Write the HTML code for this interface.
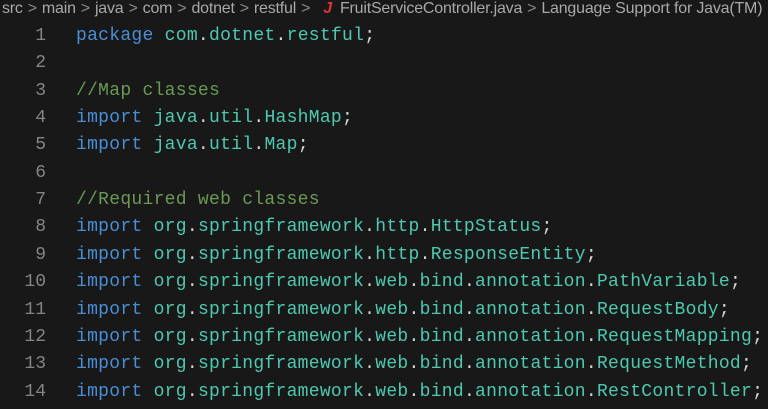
<!DOCTYPE html>
<html><head><meta charset="utf-8"><style>
html,body{margin:0;padding:0;background:#181818;width:768px;height:409px;overflow:hidden}
.bc{position:absolute;left:2px;top:0;height:26px;line-height:26px;font:16px "Liberation Sans",sans-serif;color:#a8a8a8;white-space:nowrap;letter-spacing:-0.2px}
.bc .s{color:#8a8a8a;margin:0 5px}
.bc .j{color:#e0323a;font-weight:bold;font-style:italic;margin:0 8px 0 8px}
.ln{position:absolute;left:0;width:46px;text-align:right;font:18px "Liberation Mono",monospace;color:#858585}
.cd{position:absolute;left:76px;font:18px "Liberation Mono",monospace;letter-spacing:0.28px;color:#d4d4d4;white-space:pre}
.k{color:#4a8ed6}.t{color:#4ec9b0}.c{color:#6a9955}
</style></head><body>
<div class="bc">src<span class="s">&gt;</span>main<span class="s">&gt;</span>java<span class="s">&gt;</span>com<span class="s">&gt;</span>dotnet<span class="s">&gt;</span>restful<span class="s">&gt;</span><span class="j">J</span>FruitServiceController.java<span class="s">&gt;</span>Language Support for Java(TM)</div>
<div id="lines"></div>
<script>
var L=[
'<span class="k">package</span> <span class="t">com</span>.<span class="t">dotnet</span>.<span class="t">restful</span>;',
'',
'<span class="c">//Map classes</span>',
'<span class="k">import</span> <span class="t">java</span>.<span class="t">util</span>.<span class="t">HashMap</span>;',
'<span class="k">import</span> <span class="t">java</span>.<span class="t">util</span>.<span class="t">Map</span>;',
'',
'<span class="c">//Required web classes</span>'];
var imps=['http.HttpStatus','http.ResponseEntity','web.bind.annotation.PathVariable','web.bind.annotation.RequestBody','web.bind.annotation.RequestMapping','web.bind.annotation.RequestMethod','web.bind.annotation.RestController'];
imps.forEach(function(s){var p=('org.springframework.'+s).split('.').map(function(x){return '<span class="t">'+x+'</span>'}).join('.');L.push('<span class="k">import</span> '+p+';');});
var h='';L.forEach(function(l,i){var y=35+i*27.35-9;h+='<div class="ln" style="top:'+y+'px">'+(i+1)+'</div><div class="cd" style="top:'+y+'px">'+l+'</div>';});
document.getElementById('lines').innerHTML=h;
</script>
</body></html>
